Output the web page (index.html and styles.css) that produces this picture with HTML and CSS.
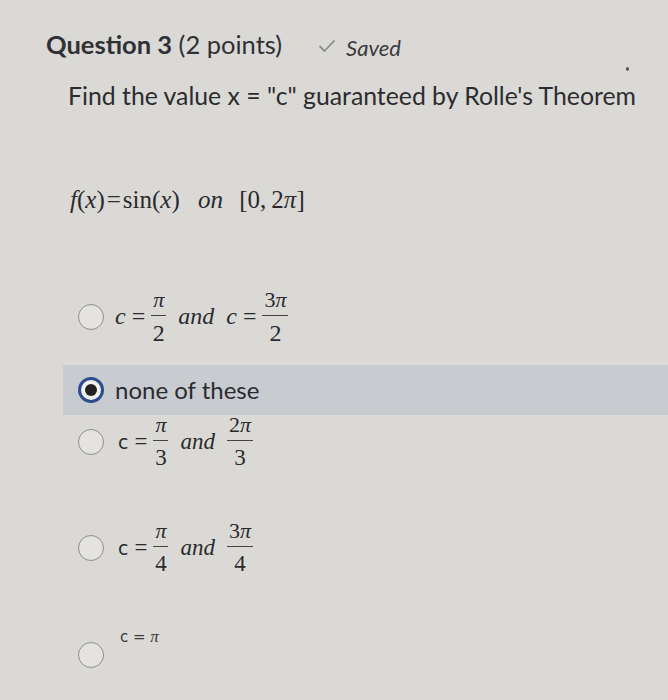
FILE: index.html
```html
<!DOCTYPE html>
<html>
<head>
<meta charset="utf-8">
<link rel="stylesheet" href="styles.css">
</head>
<body>
<div class="page">
  <div class="header">
    <h2 class="title"><span class="q">Question 3</span> (2 points)</h2>
    <span class="saved">
      <svg class="check" width="18" height="14" viewBox="0 0 18 14"><path d="M2 7.5 L6.5 12 L16 2" fill="none" stroke="#8a8c8e" stroke-width="1.8" stroke-linecap="round" stroke-linejoin="round"/></svg>
      Saved
    </span>
    <span class="dot"></span>
  </div>
  <p class="prompt">Find the value x = "c" guaranteed by Rolle's Theorem</p>
  <div class="formula"><i>f</i>(<i>x</i>)<span class="eq">=</span>sin(<i>x</i>) <i class="on">on</i> [0,&thinsp;2<i>π</i>]</div>

  <div class="options">
    <div class="opt opt1">
      <span class="radio"></span>
      <span class="math"><i>c</i> = <span class="frac"><span class="num"><i>π</i></span><span class="den">2</span></span> <i class="and">and</i> <i>c</i> = <span class="frac"><span class="num">3<i>π</i></span><span class="den">2</span></span></span>
    </div>
    <div class="opt opt2 selected">
      <span class="radio on"><span class="inner"></span></span>
      <span class="plain">none of these</span>
    </div>
    <div class="opt opt3">
      <span class="radio"></span>
      <span class="math small"><span class="cu">c</span> = <span class="frac"><span class="num"><i>π</i></span><span class="den">3</span></span> <i class="and">and</i> <span class="frac"><span class="num">2<i>π</i></span><span class="den">3</span></span></span>
    </div>
    <div class="opt opt4">
      <span class="radio"></span>
      <span class="math small"><span class="cu">c</span> = <span class="frac"><span class="num"><i>π</i></span><span class="den">4</span></span> <i class="and">and</i> <span class="frac"><span class="num">3<i>π</i></span><span class="den">4</span></span></span>
    </div>
    <div class="opt opt5">
      <span class="radio"></span>
      <span class="tiny">c = <i>π</i></span>
    </div>
  </div>
</div>
</body>
</html>
```

FILE: styles.css
```css
html, body {
  margin: 0;
  padding: 0;
}
body {
  background: #dad9d5;
  width: 668px;
  height: 700px;
  overflow: hidden;
  font-family: Lato, "Open Sans", sans-serif;
  color: #2f2f33;
}
.page {
  padding-top: 29px;
}
.header {
  display: flex;
  align-items: baseline;
  padding-left: 46px;
  position: relative;
}
.title {
  margin: 0;
  font-size: 25.5px;
  font-weight: 400;
  color: #303035;
}
.title .q {
  font-weight: 700;
}
.saved {
  margin-left: 36px;
  font-style: italic;
  font-size: 22px;
  color: #3a3a3e;
  display: inline-flex;
  align-items: center;
  gap: 10px;
}
.check {
  position: relative;
  top: -1px;
}
.dot {
  position: absolute;
  left: 626px;
  top: 38px;
  width: 3px;
  height: 4px;
  background: #555;
  border-radius: 50%;
}
.prompt {
  margin: 20px 0 0 68px;
  font-size: 24.8px;
  color: #2c2c30;
}
.formula {
  margin: 76px 0 0 70px;
  font-family: "Liberation Serif", "Times New Roman", serif;
  font-size: 25px;
  color: #2a2a2e;
}
.formula .eq {
  margin: 0 2px;
}
.formula .on {
  margin: 0 10px 0 12px;
}
.options {
  margin-top: 70px;
}
.opt {
  display: flex;
  align-items: center;
  padding-left: 15px;
  margin-left: 63px;
}
.radio {
  width: 26px;
  height: 26px;
  border: 1.5px solid #8e8e90;
  border-radius: 50%;
  box-sizing: border-box;
  background: #e4e3e0;
  flex: none;
  display: flex;
  align-items: center;
  justify-content: center;
}
.radio.on {
  border: 3px solid #2b4d8c;
  background: #f1f1f3;
}
.radio .inner {
  width: 12px;
  height: 12px;
  border-radius: 50%;
  background: #222;
}
.math {
  margin-left: 11px;
  font-family: "Liberation Serif", "Times New Roman", serif;
  font-size: 24px;
  color: #2a2a2e;
  display: inline-flex;
  align-items: center;
  gap: 6px;
}
.math .and {
  margin: 0 6px;
}
.frac {
  display: inline-flex;
  flex-direction: column;
  align-items: center;
  line-height: 1;
}
.frac .num {
  padding: 0 2px 4px;
  border-bottom: 1.2px solid #444;
  font-size: 22px;
}
.frac .den {
  padding-top: 5px;
}
.cu {
  font-family: "DejaVu Sans", sans-serif;
  font-size: 19px;
}
.math.small {
  margin-left: 14px;
  font-size: 23px;
  gap: 6px;
}
.opt1 {
  height: 66px;
  margin-top: 5px;
}
.opt2 {
  margin-top: 15px;
  height: 50px;
  background: #c8cbd0;
}
.plain {
  margin-left: 11px;
  font-size: 24px;
  color: #2b2b30;
}
.opt3 {
  height: 54px;
}
.opt4 {
  margin-top: 48px;
  height: 62px;
}
.opt5 {
  margin-top: 48px;
  height: 50px;
  align-items: flex-start;
}
.opt5 .radio {
  margin-top: 15px;
}
.tiny {
  margin-left: 16px;
  font-family: "DejaVu Sans", sans-serif;
  font-size: 15px;
  color: #3a3a3e;
}
.tiny i {
  font-family: "Liberation Serif", serif;
  font-size: 17px;
}
```
